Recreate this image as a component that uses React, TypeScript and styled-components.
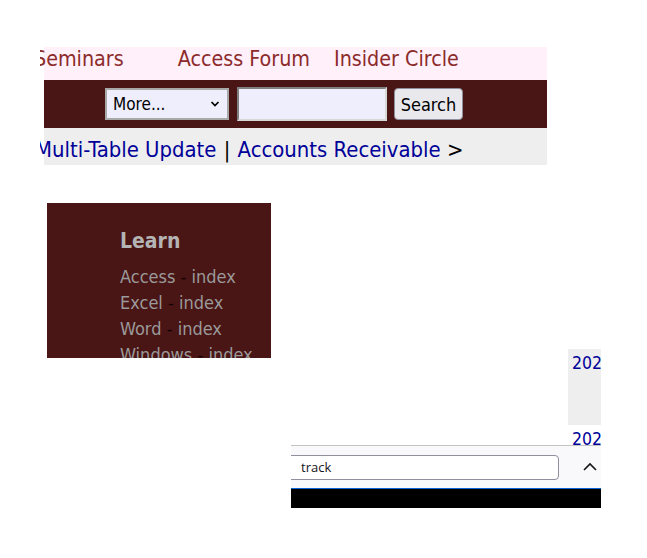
import styled, { createGlobalStyle } from "styled-components"

const GlobalStyle = createGlobalStyle`
  html, body {
    margin: 0;
    padding: 0;
    background: #ffffff;
  }
  body {
    font-family: "DejaVu Sans", Tahoma, sans-serif;
  }
`

const tahoma = `"DejaVu Sans Condensed", "DejaVu Sans", sans-serif`

const Page = styled.div`
  position: relative;
  width: 647px;
  height: 558px;
  overflow: hidden;
  font-family: ${tahoma};
  font-stretch: condensed;
`

const Header = styled.div`
  margin-left: 40px;
  width: 507px;
  padding-top: 47px;
  overflow: hidden;
`

const Band = styled.div<{ $bg: string; $h: number }>`
  margin-left: 4px;
  height: ${(p) => p.$h}px;
  background: ${(p) => p.$bg};
  display: flex;
  align-items: center;
  white-space: nowrap;
`

const NavBand = styled(Band)`
  align-items: flex-start;
  padding-top: 1px;
  box-sizing: border-box;
`

const NavLink = styled.a<{ $gap?: number }>`
  color: #8c2b2b;
  text-decoration: none;
  font-size: 21.3px;
  margin-left: ${(p) => p.$gap ?? 0}px;
  line-height: 1;
`

const Tools = styled(Band)`
  padding-left: 61px;
  gap: 8px;
`

const Select = styled.div`
  box-sizing: border-box;
  width: 124px;
  height: 32px;
  background: #eeeefc;
  border: 2px solid #a8a8a8;
  display: flex;
  align-items: center;
  justify-content: space-between;
  padding: 0 6px 0 6px;
  font-size: 17px;
  color: #000;
`

const TextBox = styled.div`
  box-sizing: border-box;
  width: 150px;
  height: 34px;
  background: #eeeefc;
  border: 2px solid;
  border-color: #808080 #d8d8d8 #d8d8d8 #808080;
`

const Button = styled.button`
  box-sizing: border-box;
  width: 69px;
  height: 32px;
  background: #e9e9ed;
  border: 1px solid #8f8f9d;
  border-radius: 4px;
  font-family: ${tahoma};
  font-stretch: condensed;
  font-size: 18px;
  color: #000;
  padding: 0;
  margin-left: -1px;
`

const CrumbBand = styled(Band)`
  padding-top: 5px;
  box-sizing: border-box;
`

const Crumbs = styled.div`
  margin-left: -9px;
  font-size: 21.9px;
  color: #000;
`

const Crumb = styled.a`
  color: #000099;
  text-decoration: none;
`

const Sep = styled.span`
  margin: 0 1px;
`

const Body = styled.div`
  display: flex;
  align-items: flex-start;
  margin-top: 38px;
`

const LearnBox = styled.div`
  box-sizing: border-box;
  margin-left: 47px;
  width: 224px;
  height: 155px;
  overflow: hidden;
  background: #4a1515;
  padding: 25px 0 0 73px;
`

const LearnTitle = styled.h3`
  margin: 0 0 10px;
  font-size: 21px;
  font-weight: bold;
  color: #b4b4b4;
  line-height: 26px;
`

const LearnLine = styled.div`
  font-size: 18px;
  line-height: 26px;
  color: #150000;
  white-space: nowrap;
`

const Muted = styled.a`
  color: #9a9a9a;
  text-decoration: none;
`

const Archive = styled.div`
  margin-left: 297px;
  margin-top: 146px;
  width: 33px;
  overflow: hidden;
  white-space: nowrap;
`

const ArchiveCell = styled.div<{ $shade?: boolean }>`
  height: ${(p) => (p.$shade ? 76 : 30)}px;
  background: ${(p) => (p.$shade ? "#eeeeee" : "transparent")};
  padding: 4px 0 0 4px;
  box-sizing: border-box;
  font-size: 17.5px;
  line-height: 20px;
  color: #000099;
`

const FindBar = styled.div`
  position: absolute;
  left: 291px;
  top: 445px;
  width: 310px;
  overflow: hidden;
`

const FindRow = styled.div`
  height: 44px;
  box-sizing: border-box;
  border-top: 1px solid #c4c4c4;
  border-bottom: 1px solid #0a64d8;
  background: #f9f9fb;
  display: flex;
  align-items: center;
`

const FindInput = styled.div`
  box-sizing: border-box;
  margin-left: -4px;
  width: 273px;
  height: 25px;
  border: 1px solid #8f8f9d;
  border-radius: 4px;
  background: #ffffff;
  display: flex;
  align-items: center;
  padding-left: 13px;
  font-family: "Open Sans", "Noto Sans", sans-serif;
  font-stretch: normal;
  font-size: 13px;
  color: #15141a;
`

const ArrowButton = styled.div`
  margin-left: 20px;
  width: 22px;
  height: 22px;
  display: flex;
  align-items: center;
  justify-content: center;
`

const Strip = styled.div`
  height: 19px;
  background: #000000;
`

function Chevron({ up }: { up?: boolean }) {
  return (
    <svg width="16" height="10" viewBox="0 0 16 10">
      <path
        d={up ? "M2 8 L8 2 L14 8" : "M2 2 L8 8 L14 2"}
        fill="none"
        stroke="#15141a"
        strokeWidth="1.6"
      />
    </svg>
  )
}

function SmallCaret() {
  return (
    <svg width="12" height="8" viewBox="0 0 12 8">
      <path d="M2.5 2 L6 5.5 L9.5 2" fill="none" stroke="#000" strokeWidth="1.7" />
    </svg>
  )
}

const learnItems = ["Access", "Excel", "Word", "Windows"]

function App() {
  return (
    <>
      <GlobalStyle />
      <Page>
        <Header>
          <NavBand $bg="#fff0fa" $h={33}>
            <NavLink $gap={-10}>Seminars</NavLink>
            <NavLink $gap={54}>Access Forum</NavLink>
            <NavLink $gap={24}>Insider Circle</NavLink>
          </NavBand>
          <Tools $bg="#4a1515" $h={48}>
            <Select>
              <span>More...</span>
              <SmallCaret />
            </Select>
            <TextBox />
            <Button>Search</Button>
          </Tools>
          <CrumbBand $bg="#eeeeee" $h={37}>
            <Crumbs>
              <Crumb>Multi-Table Update</Crumb> <Sep>|</Sep> <Crumb>Accounts Receivable</Crumb> &gt;
            </Crumbs>
          </CrumbBand>
        </Header>

        <Body>
          <LearnBox>
            <LearnTitle>Learn</LearnTitle>
            {learnItems.map((item) => (
              <LearnLine key={item}>
                <Muted>{item}</Muted> - <Muted>index</Muted>
              </LearnLine>
            ))}
          </LearnBox>
          <Archive>
            <ArchiveCell $shade>2024</ArchiveCell>
            <ArchiveCell>2023</ArchiveCell>
          </Archive>
        </Body>

        <FindBar>
          <FindRow>
            <FindInput>track</FindInput>
            <ArrowButton>
              <Chevron up />
            </ArrowButton>
          </FindRow>
          <Strip />
        </FindBar>
      </Page>
    </>
  )
}

export default App
